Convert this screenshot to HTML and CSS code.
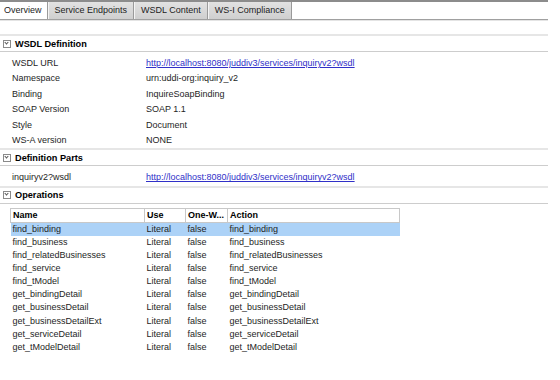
FILE: index.html
```html
<!DOCTYPE html>
<html>
<head>
  <title>WSDL Overview</title>
  <link rel="stylesheet" href="styles.css">
</head>
<body>
  <div class="panel">
    <div class="tabbar">
      <div class="tab active">Overview</div>
      <div class="tab">Service Endpoints</div>
      <div class="tab">WSDL Content</div>
      <div class="tab">WS-I Compliance</div>
    </div>

    <div class="section first">
      <div class="section-head"><span class="toggle"></span>WSDL Definition</div>
      <div class="props">
        <div class="label">WSDL URL</div>
        <div class="value"><a href="#">http://localhost:8080/juddiv3/services/inquiryv2?wsdl</a></div>
        <div class="label">Namespace</div>
        <div class="value">urn:uddi-org:inquiry_v2</div>
        <div class="label">Binding</div>
        <div class="value">InquireSoapBinding</div>
        <div class="label">SOAP Version</div>
        <div class="value">SOAP 1.1</div>
        <div class="label">Style</div>
        <div class="value">Document</div>
        <div class="label">WS-A version</div>
        <div class="value">NONE</div>
      </div>
    </div>

    <div class="section">
      <div class="section-head"><span class="toggle"></span>Definition Parts</div>
      <div class="props">
        <div class="label">inquiryv2?wsdl</div>
        <div class="value"><a href="#">http://localhost:8080/juddiv3/services/inquiryv2?wsdl</a></div>
      </div>
    </div>

    <div class="section">
      <div class="section-head"><span class="toggle"></span>Operations</div>
      <table class="ops">
        <thead>
          <tr>
            <th class="c-name">Name</th>
            <th class="c-use">Use</th>
            <th class="c-oneway">One-W...</th>
            <th class="c-action">Action</th>
          </tr>
        </thead>
        <tbody>
          <tr class="selected"><td>find_binding</td><td>Literal</td><td>false</td><td>find_binding</td></tr>
          <tr><td>find_business</td><td>Literal</td><td>false</td><td>find_business</td></tr>
          <tr><td>find_relatedBusinesses</td><td>Literal</td><td>false</td><td>find_relatedBusinesses</td></tr>
          <tr><td>find_service</td><td>Literal</td><td>false</td><td>find_service</td></tr>
          <tr><td>find_tModel</td><td>Literal</td><td>false</td><td>find_tModel</td></tr>
          <tr><td>get_bindingDetail</td><td>Literal</td><td>false</td><td>get_bindingDetail</td></tr>
          <tr><td>get_businessDetail</td><td>Literal</td><td>false</td><td>get_businessDetail</td></tr>
          <tr><td>get_businessDetailExt</td><td>Literal</td><td>false</td><td>get_businessDetailExt</td></tr>
          <tr><td>get_serviceDetail</td><td>Literal</td><td>false</td><td>get_serviceDetail</td></tr>
          <tr><td>get_tModelDetail</td><td>Literal</td><td>false</td><td>get_tModelDetail</td></tr>
        </tbody>
      </table>
    </div>
  </div>
</body>
</html>
```

FILE: styles.css
```css
body {
  margin: 0;
  background: #fff;
  font-family: "Liberation Sans", Arial, sans-serif;
  font-size: 9px;
  color: #1e1e1e;
}
.panel {
  width: 548px;
}
.tabbar {
  display: flex;
  border-top: 2px solid #8c8c8c;
  border-bottom: 1px solid #a0a0a0;
  box-shadow: 0 1px 0 #e4e4e4;
  height: 17px;
}
.tab {
  padding: 0 6px;
  line-height: 17px;
  font-size: 9px;
  color: #222;
  background: linear-gradient(#e2e2e2, #cfcfcf);
  border-left: 1px solid #f4f4f4;
  border-right: 1px solid #9a9a9a;
}
.tab.active {
  background: #fff;
  border-left: none;
  padding: 0 5px 0 4px;
}
.section.first {
  margin-top: 14px;
}
.section-head {
  display: flex;
  align-items: center;
  height: 15px;
  border-top: 2px solid #e6e6e6;
  border-bottom: 1px solid #cdcdcd;
  font-weight: bold;
  font-size: 9.2px;
  color: #000;
  padding-left: 3px;
}
.toggle {
  width: 6px;
  height: 6px;
  border: 1px solid #8a8a8a;
  margin-right: 4px;
  position: relative;
}
.toggle::after {
  content: "";
  position: absolute;
  left: 1px;
  top: 0;
  width: 2px;
  height: 2px;
  border-right: 1px solid #555;
  border-bottom: 1px solid #555;
  transform: rotate(45deg);
}
.props {
  display: grid;
  grid-template-columns: 134px auto;
  padding: 4px 0 0 12px;
}
.props div {
  line-height: 15.4px;
}
.value a {
  color: #3030c8;
}
.ops {
  border-collapse: collapse;
  margin: 4px 0 0 10px;
  width: 390px;
  table-layout: fixed;
}
.ops th {
  text-align: left;
  font-weight: bold;
  height: 13px;
  line-height: 13px;
  padding: 0 2px;
  border: 1px solid #c8c8c8;
  background: #fff;
  color: #000;
  white-space: nowrap;
  overflow: hidden;
}
.ops td {
  padding: 0 2px;
  height: 13.1px;
  line-height: 13px;
  white-space: nowrap;
}
.ops tr.selected td {
  background: #acd2f7;
}
.c-name { width: 129px; }
.c-use { width: 36px; }
.c-oneway { width: 37px; }
```
